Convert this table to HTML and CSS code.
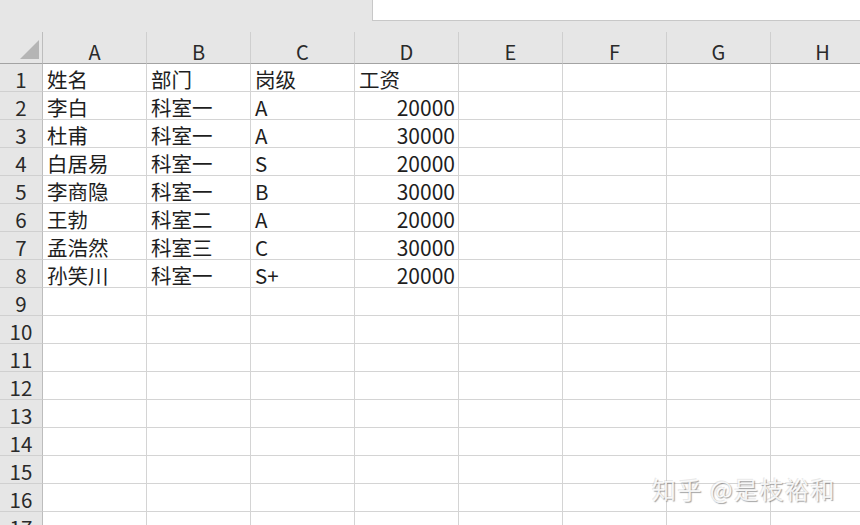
FILE: index.html
```html
<!DOCTYPE html>
<html lang="zh">
<head>
<meta charset="utf-8">
<link rel="stylesheet" href="styles.css">
</head>
<body>
<div class="app">
  <div class="toolbar"><div class="formula"></div></div>
  <div class="sheet">
    <div class="corner"><span class="tri"></span></div>
    <div class="ch">A</div><div class="ch">B</div><div class="ch">C</div><div class="ch">D</div><div class="ch">E</div><div class="ch">F</div><div class="ch">G</div><div class="ch">H</div>

    <div class="rh">1</div><div class="c">姓名</div><div class="c">部门</div><div class="c">岗级</div><div class="c">工资</div><div class="c"></div><div class="c"></div><div class="c"></div><div class="c"></div>
    <div class="rh">2</div><div class="c">李白</div><div class="c">科室一</div><div class="c">A</div><div class="c n">20000</div><div class="c"></div><div class="c"></div><div class="c"></div><div class="c"></div>
    <div class="rh">3</div><div class="c">杜甫</div><div class="c">科室一</div><div class="c">A</div><div class="c n">30000</div><div class="c"></div><div class="c"></div><div class="c"></div><div class="c"></div>
    <div class="rh">4</div><div class="c">白居易</div><div class="c">科室一</div><div class="c">S</div><div class="c n">20000</div><div class="c"></div><div class="c"></div><div class="c"></div><div class="c"></div>
    <div class="rh">5</div><div class="c">李商隐</div><div class="c">科室一</div><div class="c">B</div><div class="c n">30000</div><div class="c"></div><div class="c"></div><div class="c"></div><div class="c"></div>
    <div class="rh">6</div><div class="c">王勃</div><div class="c">科室二</div><div class="c">A</div><div class="c n">20000</div><div class="c"></div><div class="c"></div><div class="c"></div><div class="c"></div>
    <div class="rh">7</div><div class="c">孟浩然</div><div class="c">科室三</div><div class="c">C</div><div class="c n">30000</div><div class="c"></div><div class="c"></div><div class="c"></div><div class="c"></div>
    <div class="rh">8</div><div class="c">孙笑川</div><div class="c">科室一</div><div class="c">S+</div><div class="c n">20000</div><div class="c"></div><div class="c"></div><div class="c"></div><div class="c"></div>
    <div class="rh">9</div><div class="c"></div><div class="c"></div><div class="c"></div><div class="c"></div><div class="c"></div><div class="c"></div><div class="c"></div><div class="c"></div>
    <div class="rh">10</div><div class="c"></div><div class="c"></div><div class="c"></div><div class="c"></div><div class="c"></div><div class="c"></div><div class="c"></div><div class="c"></div>
    <div class="rh">11</div><div class="c"></div><div class="c"></div><div class="c"></div><div class="c"></div><div class="c"></div><div class="c"></div><div class="c"></div><div class="c"></div>
    <div class="rh">12</div><div class="c"></div><div class="c"></div><div class="c"></div><div class="c"></div><div class="c"></div><div class="c"></div><div class="c"></div><div class="c"></div>
    <div class="rh">13</div><div class="c"></div><div class="c"></div><div class="c"></div><div class="c"></div><div class="c"></div><div class="c"></div><div class="c"></div><div class="c"></div>
    <div class="rh">14</div><div class="c"></div><div class="c"></div><div class="c"></div><div class="c"></div><div class="c"></div><div class="c"></div><div class="c"></div><div class="c"></div>
    <div class="rh">15</div><div class="c"></div><div class="c"></div><div class="c"></div><div class="c"></div><div class="c"></div><div class="c"></div><div class="c"></div><div class="c"></div>
    <div class="rh">16</div><div class="c"></div><div class="c"></div><div class="c"></div><div class="c"></div><div class="c"></div><div class="c"></div><div class="c"></div><div class="c"></div>
    <div class="rh">17</div><div class="c"></div><div class="c"></div><div class="c"></div><div class="c"></div><div class="c"></div><div class="c"></div><div class="c"></div><div class="c"></div>
  </div>
  <div class="watermark">知乎 @是枝裕和</div>
</div>
</body>
</html>
```

FILE: styles.css
```css
* { box-sizing: border-box; }
html, body { margin: 0; padding: 0; }
body {
  width: 860px;
  height: 525px;
  overflow: hidden;
  background: #ffffff;
  font-family: "Noto Sans CJK SC", "Noto Sans", sans-serif;
  color: #1e1e1e;
}
.app {
  position: relative;
  width: 860px;
  height: 525px;
  overflow: hidden;
}
.toolbar {
  height: 32px;
  background: #e6e6e6;
  display: flex;
  justify-content: flex-end;
  align-items: flex-start;
}
.formula {
  width: 488px;
  height: 21px;
  background: #ffffff;
  border-left: 1px solid #c8c8c8;
  border-bottom: 1px solid #c8c8c8;
}
.sheet {
  display: grid;
  grid-template-columns: 43px repeat(8, 104px);
  grid-template-rows: 32px repeat(17, 28px);
  width: 875px;
}
.corner {
  background: #e6e6e6;
  border-right: 1px solid #bdbdbd;
  border-bottom: 1px solid #a3a3a3;
  position: relative;
}
.tri {
  position: absolute;
  left: 20px;
  top: 8px;
  width: 0;
  height: 0;
  border-left: 19px solid transparent;
  border-bottom: 19px solid #b5b5b5;
}
.ch {
  background: #e6e6e6;
  border-right: 1px solid #cfcfcf;
  border-bottom: 1px solid #a3a3a3;
  display: flex;
  align-items: center;
  justify-content: center;
  font-size: 20px;
  line-height: 1;
  padding-top: 8px;
  color: #2a2a2a;
}
.rh {
  background: #e6e6e6;
  border-right: 1px solid #bdbdbd;
  border-bottom: 1px solid #d0d0d0;
  display: flex;
  align-items: center;
  justify-content: center;
  font-size: 20.5px;
  line-height: 1;
  padding-top: 3px;
  color: #2a2a2a;
}
.c {
  border-right: 1px solid #d4d4d4;
  border-bottom: 1px solid #d4d4d4;
  display: flex;
  align-items: center;
  padding: 3px 3px 0 4px;
  font-size: 20.5px;
  line-height: 1;
  white-space: nowrap;
}
.c.n {
  justify-content: flex-end;
  font-size: 21px;
}
.watermark {
  position: absolute;
  left: 652px;
  top: 477px;
  font-size: 24px;
  line-height: 1;
  color: rgba(255, 255, 255, 0.85);
  text-shadow: 1px 1px 1px rgba(90, 90, 90, 0.55), -1px -1px 0 rgba(180, 180, 180, 0.3);
  letter-spacing: 1.5px;
  white-space: nowrap;
}
```
